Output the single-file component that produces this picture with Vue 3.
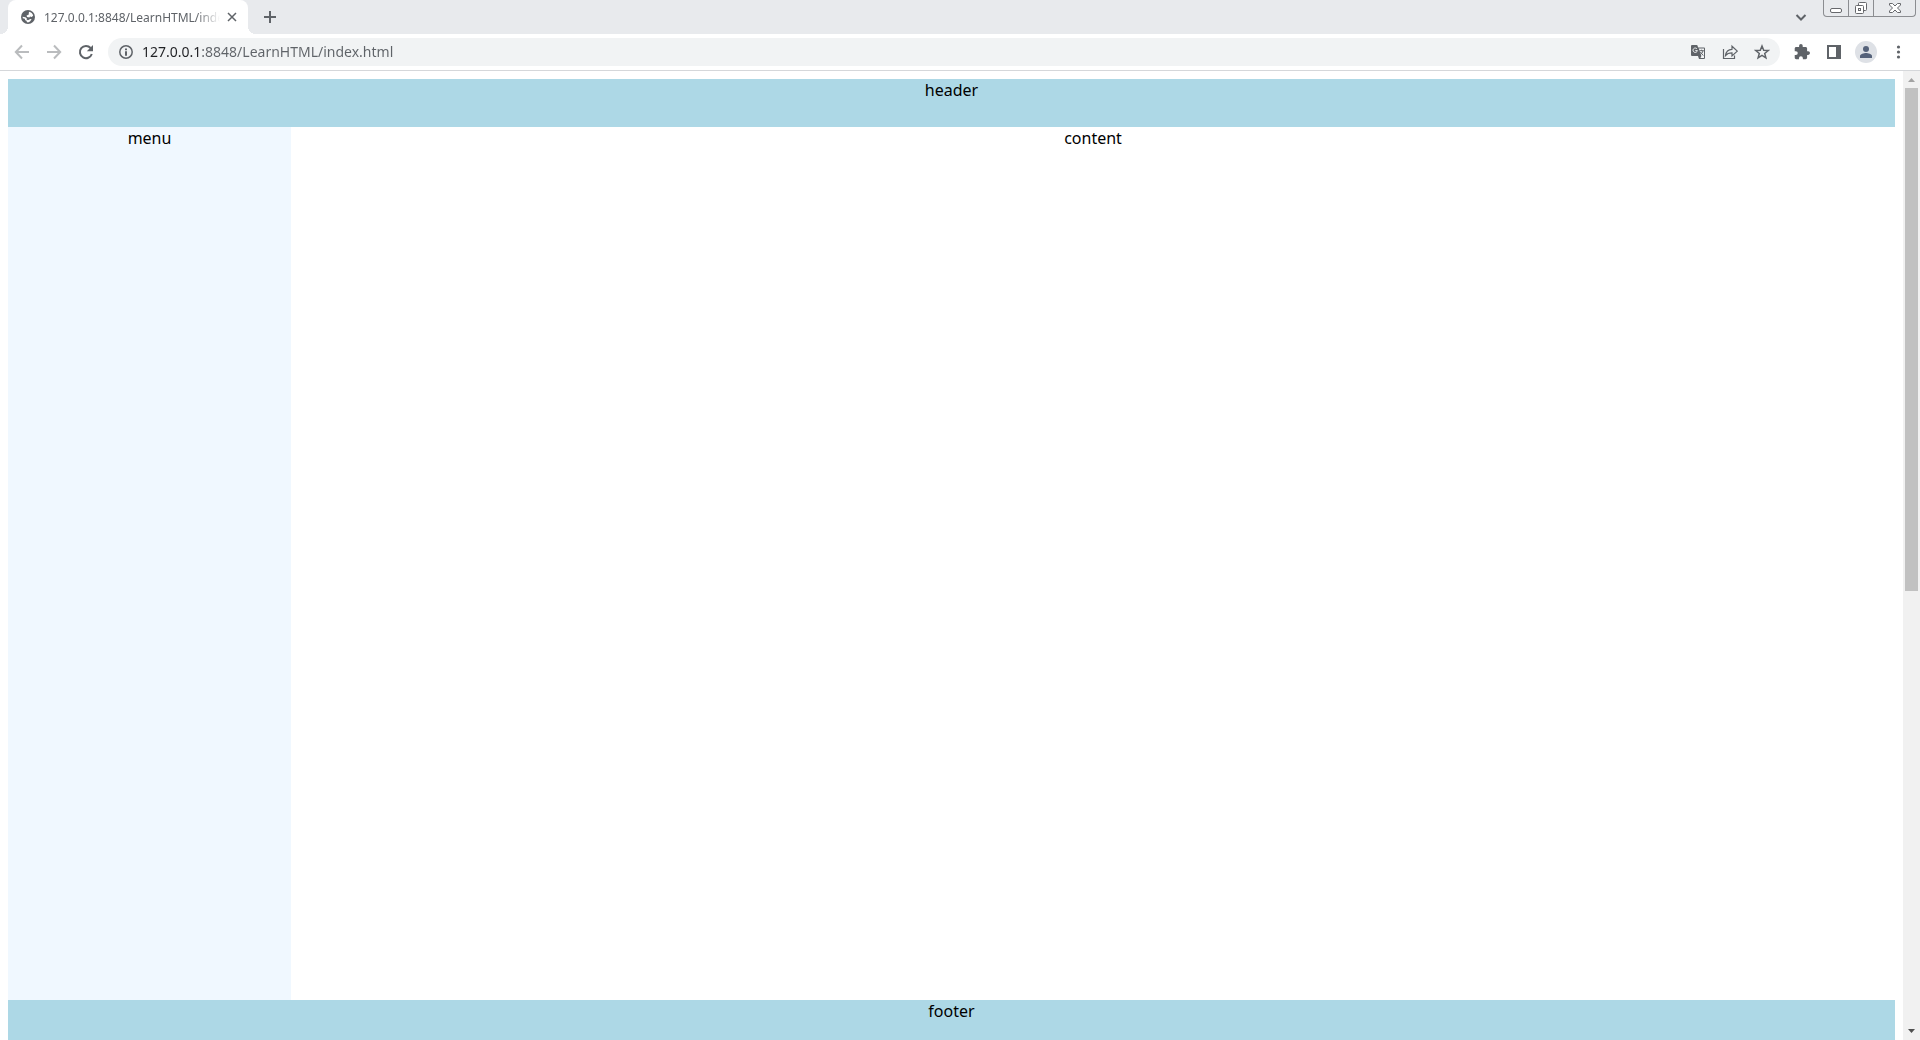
<script setup>
import { ref } from 'vue';

const title = '127.0.0.1:8848/LearnHTML/index.html';
const url = ref('127.0.0.1:8848/LearnHTML/index.html');
</script>

<template>
  <div class="browser">
    <header class="tab-strip">
      <div class="tab">
        <svg class="favicon" viewBox="0 0 16 16" aria-hidden="true">
          <circle cx="8" cy="8" r="7" fill="#5f6368" />
          <path d="M9 2.7c2.100.4 3.700 1.900 4.200 3.900L11.800 8 10 7.400 9.400 8.400 7 8.100 6.600 6.500 8.600 5.700z" fill="#fff" />
          <path d="M2.600 7.700 5.400 8.200 6.800 9.200 6.600 10.400 8 11.200 10.200 10 11.600 10.300 10 12.600 8 13.400 6.800 13 6.600 11.800 5.200 11.200 4.800 9.800 2.800 9.200z" fill="#fff" />
        </svg>
        <span class="tab-title">{{ title }}</span>
        <button class="tab-close" aria-label="Close tab">
          <svg viewBox="0 0 16 16"><path d="m4 4 8 8M12 4l-8 8" /></svg>
        </button>
      </div>
      <button class="strip-button" aria-label="New tab">
        <svg viewBox="0 0 16 16"><path d="M8 2v12M2 8h12" /></svg>
      </button>
      <button class="strip-button search-tabs" aria-label="Search tabs">
        <svg viewBox="0 0 16 16"><path d="m3.500 6 4.500 4.500L12.500 6" /></svg>
      </button>
      <div class="window-controls">
        <button aria-label="Minimize">
          <svg viewBox="0 0 16 16"><rect x="2.5" y="8.5" width="11" height="4" rx="1.5" /></svg>
        </button>
        <button aria-label="Restore">
          <svg viewBox="0 0 16 16">
            <rect x="5.5" y="2.5" width="8" height="8" rx="1" />
            <rect x="2.5" y="5.5" width="8" height="8" rx="1" />
            <rect x="5.5" y="8.5" width="2" height="2" />
          </svg>
        </button>
        <button class="window-close" aria-label="Close">
          <svg viewBox="0 0 16 16">
            <path d="M2.5 3.5h3L8 6l2.5-2.5h3V5l-3 3 3 3v1.5h-3L8 10l-2.500 2.500h-3V11l3-3-3-3z" />
          </svg>
        </button>
      </div>
    </header>

    <nav class="toolbar">
      <button class="tool faded" aria-label="Back">
        <svg viewBox="0 0 16 16"><path d="M15 8H2M8 1.5 1.8 8 8 14.5" /></svg>
      </button>
      <button class="tool faded" aria-label="Forward">
        <svg viewBox="0 0 16 16"><path d="M1 8h13M8 1.5 14.2 8 8 14.5" /></svg>
      </button>
      <button class="tool" aria-label="Reload">
        <svg viewBox="0 0 16 16">
          <path d="M13.8 10A6.1 6.1 0 1 1 12.6 4" />
          <path class="solid" d="M15 1v6.200H8.800z" />
        </svg>
      </button>
      <div class="omnibox">
        <button class="tool" aria-label="View site information">
          <svg class="thin" viewBox="0 0 16 16">
            <circle cx="8" cy="8" r="6.2" />
            <path class="solid" d="M7 4.500h2v1.700H7zM7 7.200h2v4.500H7z" />
          </svg>
        </button>
        <input v-model="url" class="address" type="text" aria-label="Address" spellcheck="false" />
        <button class="tool" aria-label="Translate this page">
          <svg class="thin" viewBox="0 0 16 16">
            <path class="solid" d="M2 1h5.200l1 2.500H14a1 1 0 0 1 1 1V14a1 1 0 0 1-1 1H9l-1-3H2a1 1 0 0 1-1-1V2a1 1 0 0 1 1-1z" />
            <path class="paper" d="M8.800 4.500H14V14h-3.600l1-2z" />
            <path class="cut" d="M7 4.900a2.200 2.200 0 1 0 .4 1.700H5.300" />
            <path class="mark" d="M9.400 6.700h4.400M11.600 5.700v1M13 6.700c-.4 1.800-1.500 3.100-2.800 4M10.300 8l3 3.500" />
          </svg>
        </button>
        <button class="tool" aria-label="Share this page">
          <svg class="fine" viewBox="0 0 16 16">
            <path d="M1.500 5v9.500h11v-3" />
            <path d="M3.500 11.500C4 7.500 6.500 5.500 10 5.300V2.200l5.300 4.900L10 12V8.900c-3 0-5 .8-6.500 2.600z" />
          </svg>
        </button>
        <button class="tool" aria-label="Bookmark this tab">
          <svg class="thin" viewBox="0 0 16 16">
            <path d="m8 2 1.700 4.200 4.500.3-3.500 2.900 1.200 4.400L8 11.400l-3.900 2.400 1.200-4.400-3.500-2.900 4.500-.3z" />
          </svg>
        </button>
      </div>
      <button class="tool" aria-label="Extensions">
        <svg viewBox="1 1 22 22">
          <path class="solid" d="M20.500 11H19V7c0-1.100-.9-2-2-2h-4V3.500a2.500 2.500 0 0 0-5 0V5H4c-1.100 0-2 .9-2 2v3.800h1.500a2.700 2.700 0 0 1 0 5.400H2V20c0 1.100.9 2 2 2h3.800v-1.500a2.700 2.700 0 0 1 5.400 0V22H17c1.100 0 2-.9 2-2v-4h1.500a2.500 2.500 0 0 0 0-5z" />
        </svg>
      </button>
      <button class="tool" aria-label="Side panel">
        <svg viewBox="0 0 16 16">
          <path class="solid" fill-rule="evenodd" d="M1 1h14v14H1zM3 3v10h7V3z" />
        </svg>
      </button>
      <button class="tool" aria-label="Profile">
        <svg class="avatar" viewBox="0 0 22 22">
          <circle cx="11" cy="11" r="11" fill="#dee1e6" />
          <circle cx="11" cy="8" r="3" fill="#55627a" />
          <path d="M5 17v-2c0-2 4-3 6-3s6 1 6 3v2z" fill="#55627a" />
        </svg>
      </button>
      <button class="tool" aria-label="Menu">
        <svg viewBox="0 0 16 16">
          <circle class="solid" cx="8.5" cy="3" r="1.6" />
          <circle class="solid" cx="8.5" cy="8" r="1.6" />
          <circle class="solid" cx="8.5" cy="13" r="1.6" />
        </svg>
      </button>
    </nav>

    <div class="viewport">
      <div class="page">
        <div class="page-header">header</div>
        <div class="page-main">
          <div class="page-menu">menu</div>
          <main class="page-content">content</main>
        </div>
        <div class="page-footer">footer</div>
      </div>
      <div class="scrollbar">
        <svg viewBox="0 0 17 17" aria-hidden="true"><path d="M5 11h7L8.500 7z" fill="#a3a3a3" /></svg>
        <div class="track">
          <div class="thumb"></div>
        </div>
        <svg viewBox="0 0 17 17" aria-hidden="true"><path d="M5 6h7l-3.500 4z" fill="#505050" /></svg>
      </div>
    </div>
  </div>
</template>

<style>
body {
  margin: 0;
}
</style>

<style scoped>
.browser {
  display: flex;
  flex-direction: column;
  height: 100vh;
  overflow: hidden;
  background: #fff;
  font-family: "Noto Sans", "Open Sans", sans-serif;
}

button {
  display: flex;
  align-items: center;
  justify-content: center;
  padding: 0;
  border: 0;
  background: none;
}

button svg {
  width: 16px;
  height: 16px;
  fill: none;
  stroke: #5f6368;
  stroke-width: 2;
}

/* Tabs */
.tab-strip {
  display: flex;
  flex: none;
  height: 34px;
  padding: 0 4px 0 8px;
  background: #e8eaed;
}

.tab {
  position: relative;
  display: flex;
  align-items: center;
  box-sizing: border-box;
  width: 240px;
  padding: 0 8px 0 12px;
  border-radius: 8px 8px 0 0;
  background: #fff;
}

.tab::before,
.tab::after {
  content: "";
  position: absolute;
  bottom: 0;
  width: 8px;
  height: 8px;
}

.tab::before {
  right: 100%;
  background: radial-gradient(circle at 0 0, transparent 8px, #fff 8px);
}

.tab::after {
  left: 100%;
  background: radial-gradient(circle at 100% 0, transparent 8px, #fff 8px);
}

.favicon {
  flex: none;
  width: 16px;
  height: 16px;
}

.tab-title {
  flex: 1;
  min-width: 0;
  margin: 0 4px 0 8px;
  overflow: hidden;
  white-space: nowrap;
  font-size: 12px;
  color: #5f6368;
  mask-image: linear-gradient(to left, transparent, #000 24px);
}

.tab-close svg {
  stroke-width: 1.5;
}

.strip-button {
  width: 28px;
  margin: 3px 8px;
}

.search-tabs {
  margin-left: auto;
}

.window-controls {
  display: flex;
  box-sizing: border-box;
  height: 17px;
  border: 1px solid #8b8d91;
  border-top: 0;
  border-radius: 0 0 4px 4px;
}

.window-controls button {
  width: 25px;
  border-right: 1px solid #8b8d91;
}

.window-controls .window-close {
  width: 41px;
  border-right: 0;
}

.window-controls svg {
  fill: #fff;
  stroke: #66686c;
  stroke-width: 1;
}

/* Toolbar */
.toolbar {
  display: flex;
  flex: none;
  align-items: center;
  height: 36px;
  padding: 0 6px;
  border-bottom: 1px solid #d5d7da;
}

.tool {
  flex: none;
  width: 32px;
  height: 28px;
}

.tool.faded svg {
  stroke: #babcbe;
}

.tool svg.thin {
  stroke-width: 1.5;
}

.tool svg.fine {
  stroke-width: 1.2;
}

.tool .solid {
  fill: #5f6368;
  stroke: none;
}

.tool .paper {
  fill: #f1f3f4;
  stroke: none;
}

.tool .cut {
  stroke: #f1f3f4;
  stroke-width: 1;
}

.tool .mark {
  stroke-width: 1;
}

.tool .avatar {
  width: 22px;
  height: 22px;
  stroke: none;
}

.omnibox {
  display: flex;
  flex: 1;
  align-items: center;
  box-sizing: border-box;
  min-width: 0;
  height: 28px;
  margin: 0 6px;
  padding: 0 2px;
  border-radius: 14px;
  background: #f1f3f4;
}

/* The host part of the address is darker than the rest */
.address {
  flex: 1;
  min-width: 0;
  padding: 0 0 2px;
  border: 0;
  outline: 0;
  font-family: inherit;
  font-size: 14px;
  color: transparent;
  caret-color: #202124;
  background: linear-gradient(to right, #202124 59px, #5f6368 59px);
  background-clip: text;
}

/* Page */
.viewport {
  display: flex;
  flex: 1;
  min-height: 0;
}

.page {
  display: flex;
  flex: 1;
  flex-direction: column;
  padding: 8px 8px 0;
  overflow: hidden;
  font-size: 16px;
  line-height: 22px;
  text-align: center;
  color: #000;
}

.page-header,
.page-footer {
  flex: none;
  background: lightblue;
}

.page-header {
  height: 48px;
}

.page-footer {
  height: 40px;
}

.page-main {
  display: flex;
  flex: 1;
}

.page-menu {
  width: 15%;
  background: aliceblue;
}

.page-content {
  flex: 1;
}

.scrollbar {
  display: flex;
  flex-direction: column;
  width: 17px;
  background: #f1f1f1;
}

.scrollbar svg {
  flex: none;
  width: 17px;
  height: 17px;
}

.track {
  flex: 1;
  padding: 0 2px;
}

.thumb {
  height: 53.8%;
  background: #c1c1c1;
}
</style>
